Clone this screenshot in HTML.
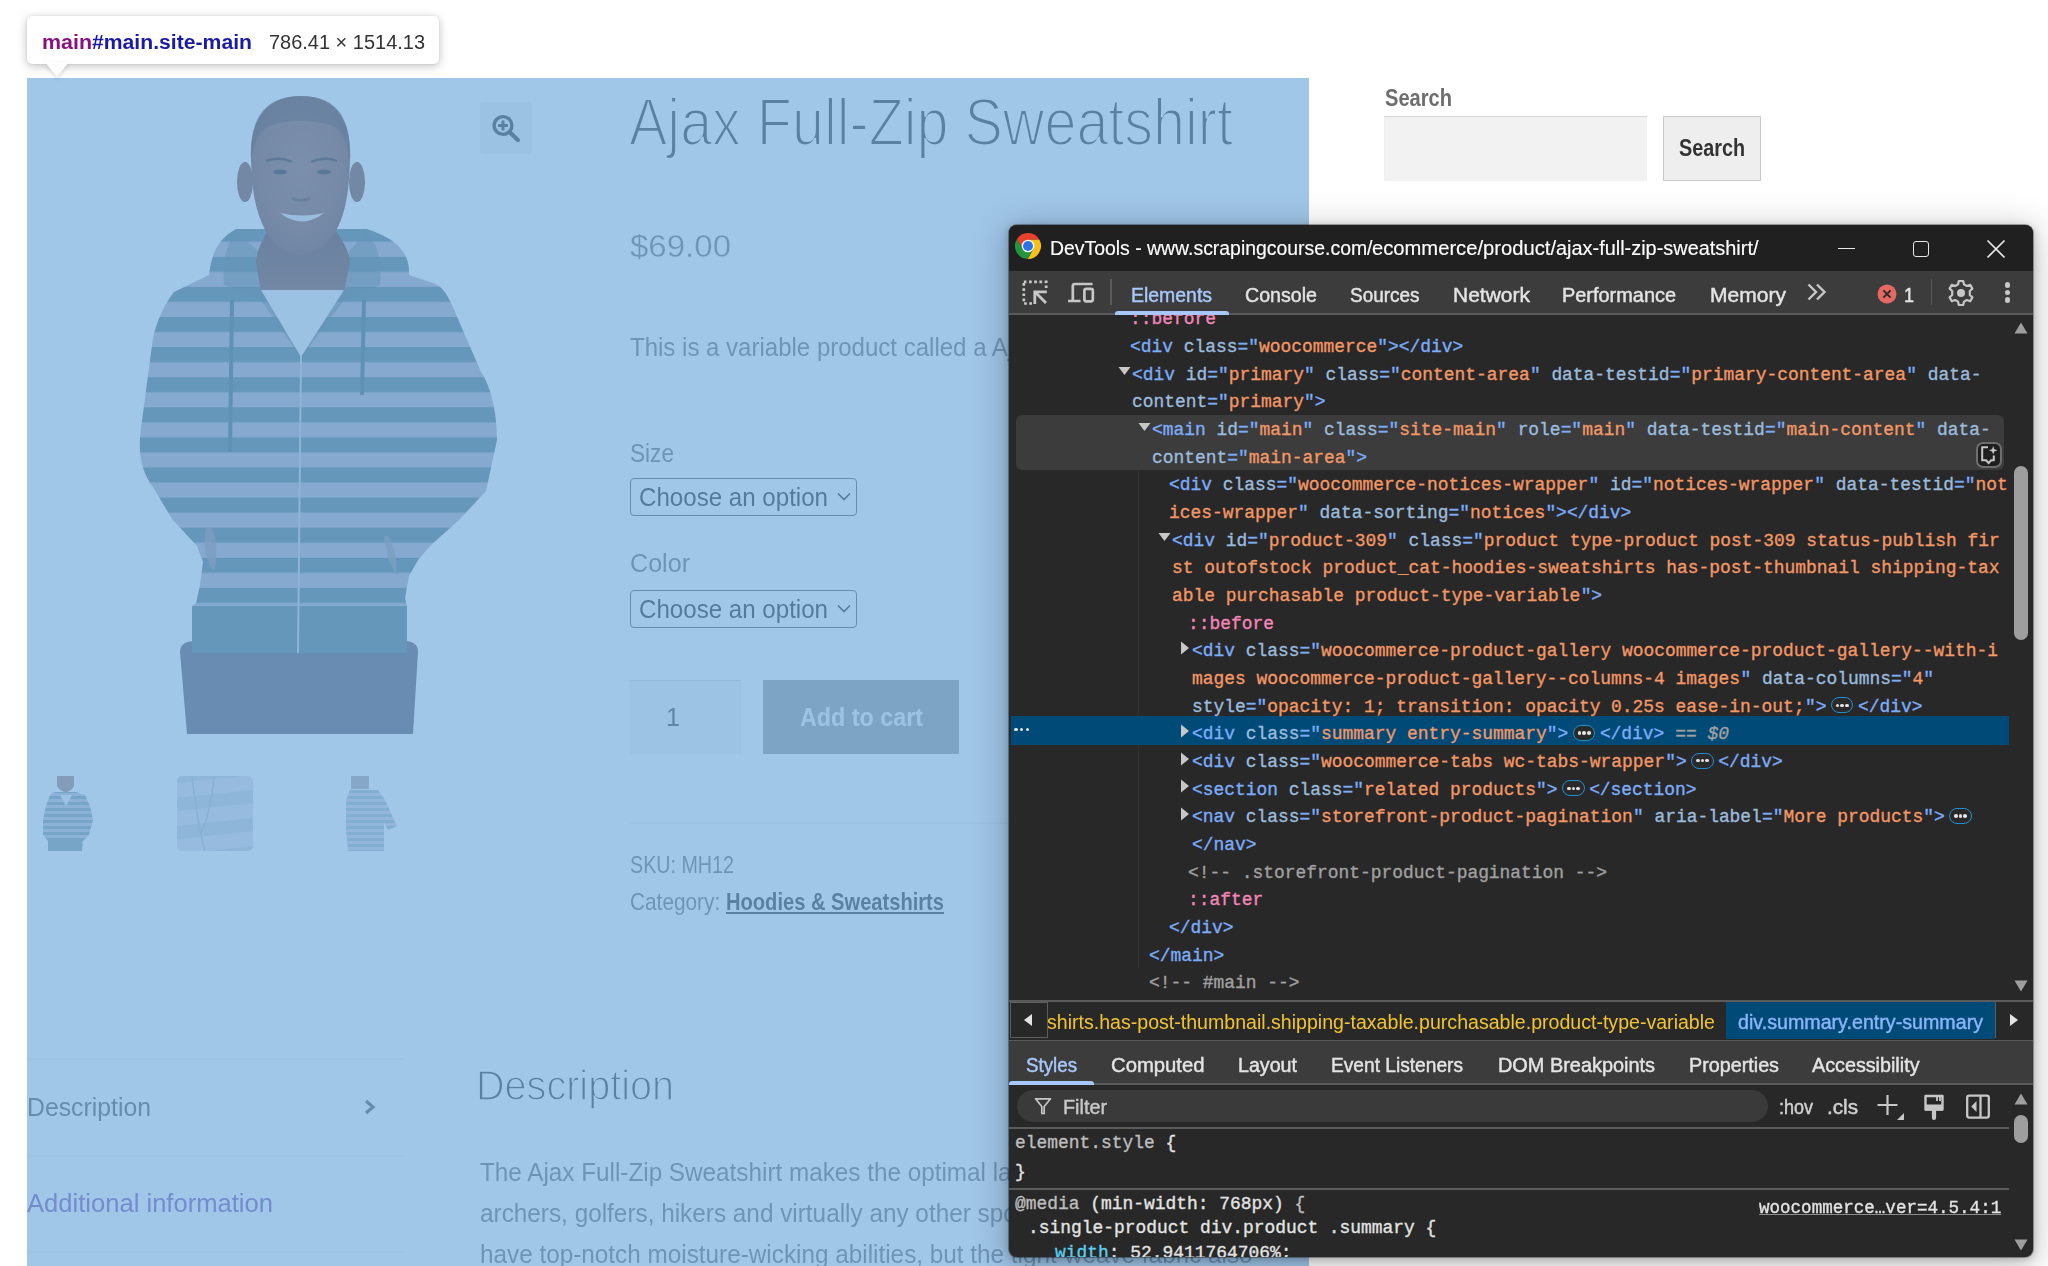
<!DOCTYPE html><html><head><meta charset="utf-8"><style>
html,body{margin:0;padding:0}
body{width:2048px;height:1266px;overflow:hidden;background:#fff;position:relative;font-family:"Liberation Sans",sans-serif}
.t{position:absolute;white-space:pre;line-height:1;transform-origin:0 0}
.r{position:absolute}
.abs{position:absolute}
#page{position:absolute;left:0;top:0;width:2048px;height:1266px}
</style></head><body><div id="page">
<svg class="abs" style="left:0;top:0" width="620" height="760" viewBox="0 0 620 760">
<defs><radialGradient id="fg" cx="0.5" cy="0.45" r="0.6"><stop offset="0" stop-color="#93604f"/><stop offset="0.7" stop-color="#835043"/><stop offset="1" stop-color="#6a3d31"/></radialGradient><linearGradient id="ng" x1="0" y1="0" x2="0" y2="1"><stop offset="0" stop-color="#5e362b"/><stop offset="1" stop-color="#7a4a3c"/></linearGradient>
<clipPath id="hc"><path d="M209,275 L174,292 C160,310 154,330 152,345 L141,428 C138,450 140,470 153,487 L172,519 L197,546 L203,562 L200,585 L196,603 L192,606 L192,653 L407,653 L407,606 L405,598 L409,576 L418,560 L430,546 L460,519 L486,491 L497,440 C497,410 490,385 481,372 L452,305 C445,290 440,285 433,283 L409,275 C410,255 400,240 367,229 L236,229 C220,238 212,250 209,275 Z"/></clipPath>
<pattern id="st" x="0" y="317" width="40" height="30.1" patternUnits="userSpaceOnUse"><rect width="40" height="30.1" fill="#b2abb8"/><rect width="40" height="15" fill="#4f7679"/></pattern>
</defs>
<path d="M180,652 C180,644 186,641 196,641 L404,641 C414,641 418,645 418,652 L413,734 L187,734 Z" fill="#5e5a60"/>
<g clip-path="url(#hc)"><rect x="130" y="225" width="380" height="440" fill="url(#st)"/></g>
<path d="M236,232 C226,245 222,262 224,285 L261,300 L301,358 L257,250 Z" fill="#5a6f72" opacity="0.55"/>
<path d="M367,232 C378,245 382,262 380,285 L344,300 L301,358 L350,250 Z" fill="#5a6f72" opacity="0.55"/>
<path d="M192,606 L407,606 L407,653 L192,653 Z" fill="#4f7679"/>
<path d="M270,228 L334,228 C342,240 349,250 350,262 L344,292 L301,300 L261,292 L256,262 C257,250 262,240 270,228 Z" fill="url(#ng)"/>
<path d="M261,290 L344,290 L301,357 Z" fill="#f0f0f0"/>
<path d="M251,160 C249,118 268,96 301,96 C334,96 352,118 350,160 C349,200 343,228 325,245 C315,253 307,255 301,255 C294,255 286,253 277,245 C259,228 252,200 251,160 Z" fill="url(#fg)"/>
<path d="M251,160 C249,112 270,96 301,96 C332,96 352,112 350,160 C347,140 340,128 330,125 C318,122 310,121 301,121 C290,121 280,122 270,126 C260,130 254,142 251,160 Z" fill="#4d3027" opacity="0.6"/>
<ellipse cx="245" cy="182" rx="8" ry="20" fill="#7a4a3c"/>
<ellipse cx="357" cy="182" rx="8" ry="20" fill="#7a4a3c"/>
<path d="M280,213 Q302,218 324,213 Q302,230 280,213 Z" fill="#e9e4e4"/><path d="M292,198 Q301,203 310,198" stroke="#5b352b" stroke-width="3" fill="none"/>
<ellipse cx="280" cy="172" rx="7" ry="2.6" fill="#2a1a14"/><path d="M266,161 Q280,156 292,162" stroke="#3a2219" stroke-width="2.4" fill="none"/>
<ellipse cx="324" cy="172" rx="7" ry="2.6" fill="#2a1a14"/><path d="M311,162 Q324,156 337,161" stroke="#3a2219" stroke-width="2.4" fill="none"/>
<path d="M301,356 L298,653" stroke="#c9c9c9" stroke-width="2"/>
<path d="M232,300 L230,452" stroke="#3f6466" stroke-width="4"/>
<path d="M364,300 L362,395" stroke="#3f6466" stroke-width="4"/>
<path d="M206,528 C203,545 205,560 214,571 C218,556 217,540 212,528 Z" fill="#9a8a90" opacity="0.8"/>
<path d="M384,536 C386,552 390,566 396,575 C398,560 394,546 388,536 Z" fill="#9a8a90" opacity="0.8"/>
</svg>

<div class="r" style="left:480.00px;top:102.00px;width:52.00px;height:52.00px;background:rgba(0,0,0,0.06);border-radius:4px;"></div>
<svg class="abs" style="left:492px;top:114px" width="30" height="30" viewBox="0 0 30 30"><circle cx="11" cy="11.5" r="8.9" fill="none" stroke="#333" stroke-width="3.4"/><path d="M17.8 18.3 L25.8 26" stroke="#333" stroke-width="4.2" stroke-linecap="round"/><path d="M11 6.6 V16.4 M6.1 11.5 H15.9" stroke="#333" stroke-width="3"/></svg>
<div class="t" style="left:628.50px;top:89.40px;font-size:66px;color:#333333;transform:scaleX(0.8713);-webkit-text-stroke:2.2px #fff;">Ajax Full-Zip Sweatshirt</div>
<div class="t" style="left:630.00px;top:229.90px;font-size:32px;color:#6d6d6d;transform:scaleX(1.0319);-webkit-text-stroke:0.3px #fff;">$69.00</div>
<div class="t" style="left:630.00px;top:335.40px;font-size:25.5px;color:#6d6d6d;transform:scaleX(0.942);">This is a variable product called a Ajax Full-Zip Sweatshirt</div>
<div class="t" style="left:630.00px;top:439.98px;font-size:26px;color:#6d6d6d;transform:scaleX(0.8699);">Size</div>
<div class="r" style="left:630.00px;top:478.00px;width:227.00px;height:38.00px;background:#fff;border:1.3px solid #555;border-radius:4px;box-sizing:border-box;"></div>
<div class="t" style="left:639.00px;top:483.98px;font-size:26px;color:#222;transform:scaleX(0.9273);">Choose an option</div>
<svg class="abs" style="left:836px;top:490px" width="16" height="12" viewBox="0 0 16 12"><path d="M2 3.5 L8 9.5 L14 3.5" fill="none" stroke="#222" stroke-width="1.6"/></svg>
<div class="t" style="left:630.00px;top:550.48px;font-size:26px;color:#6d6d6d;transform:scaleX(0.9657);">Color</div>
<div class="r" style="left:630.00px;top:590.00px;width:227.00px;height:38.00px;background:#fff;border:1.3px solid #555;border-radius:4px;box-sizing:border-box;"></div>
<div class="t" style="left:639.00px;top:595.98px;font-size:26px;color:#222;transform:scaleX(0.9273);">Choose an option</div>
<svg class="abs" style="left:836px;top:602px" width="16" height="12" viewBox="0 0 16 12"><path d="M2 3.5 L8 9.5 L14 3.5" fill="none" stroke="#222" stroke-width="1.6"/></svg>
<div class="r" style="left:630.00px;top:680.00px;width:111.00px;height:74.00px;background:#f2f2f2;box-shadow:inset 0 1px 1px rgba(0,0,0,.125);"></div>
<div class="t" style="left:666.00px;top:703.98px;font-size:26px;color:#43454b;transform:scaleX(0.9682);">1</div>
<div class="r" style="left:763.00px;top:680.00px;width:196.00px;height:74.00px;background:#999999;"></div>
<div class="t" style="left:800.00px;top:703.98px;font-size:26px;color:#f4f4f4;font-weight:bold;transform:scaleX(0.8963);">Add to cart</div>
<div class="r" style="left:630.00px;top:822.00px;width:390.00px;height:1.50px;background:rgba(0,0,0,0.05);"></div>
<div class="t" style="left:630.00px;top:852.67px;font-size:24px;color:#6d6d6d;transform:scaleX(0.8208);">SKU: MH12</div>
<div class="t" style="left:630.00px;top:890.17px;font-size:24px;color:#6d6d6d;transform:scaleX(0.8671);">Category: </div>
<div class="t" style="left:726.00px;top:890.17px;font-size:24px;color:#333333;font-weight:bold;transform:scaleX(0.8383);text-decoration:underline;">Hoodies &amp; Sweatshirts</div>
<svg class="abs" style="left:0;top:760px" width="420" height="100" viewBox="0 760 420 100">
<defs>
<pattern id="st2" x="0" y="796" width="20" height="6" patternUnits="userSpaceOnUse"><rect width="20" height="6" fill="#b2abb8"/><rect width="20" height="3" fill="#4f7679"/></pattern>
<pattern id="st3" x="0" y="0" width="80" height="28" patternUnits="userSpaceOnUse" patternTransform="rotate(-6)"><rect width="80" height="28" fill="#c4bfc6"/><rect width="80" height="13" fill="#8fa2a6"/></pattern>
</defs>
<g opacity="0.7">
<path d="M57,776 L74,776 L74,786 C72,790 68,792 65.5,792 C63,792 59,790 57,786 Z" fill="#835043"/>
<path d="M55,792 L76,792 L85,795 L90,806 L93,820 L89,835 L83,841 L82,851 L48,851 L48,841 L43,835 L43,820 L46,806 L50,795 Z" fill="url(#st2)"/>
<path d="M60,795 L72,795 L66,806 Z" fill="#f0f0f0"/>
<rect x="48" y="841" width="34" height="10" fill="#4f7679"/>
</g>
<g opacity="0.5">
<rect x="177" y="776" width="76" height="75" rx="5" fill="url(#st3)"/>
<path d="M214,776 C212,800 208,820 200,835 M192,776 C196,810 200,835 205,851" stroke="#6f8587" stroke-width="1.5" fill="none"/>
<path d="M351,776 L369,776 L369,789 L351,789 Z" fill="#6b4a3f"/>
<path d="M350,790 L378,790 L385,800 L397,826 L388,830 L384,822 L384,851 L348,851 L346,830 L346,800 Z" fill="url(#st2)"/>
</g>
</svg>

<div class="r" style="left:27.00px;top:1058.00px;width:378.00px;height:2.00px;background:rgba(0,0,0,0.05);"></div>
<div class="t" style="left:27.00px;top:1093.98px;font-size:26px;color:#555555;transform:scaleX(0.9535);">Description</div>
<svg class="abs" style="left:362px;top:1098px" width="16" height="18" viewBox="0 0 16 18"><path d="M4 3 L11 9 L4 15" fill="none" stroke="#555" stroke-width="3.2"/></svg>
<div class="r" style="left:27.00px;top:1155.00px;width:378.00px;height:2.00px;background:rgba(0,0,0,0.05);"></div>
<div class="t" style="left:27.00px;top:1189.98px;font-size:26px;color:#7f54b3;transform:scaleX(0.9839);">Additional information</div>
<div class="r" style="left:27.00px;top:1251.00px;width:378.00px;height:2.00px;background:rgba(0,0,0,0.05);"></div>
<div class="t" style="left:476.00px;top:1064.08px;font-size:43px;color:#333333;transform:scaleX(0.9206);-webkit-text-stroke:1.4px #fff;">Description</div>
<div class="t" style="left:479.50px;top:1160.00px;font-size:25.5px;color:#6d6d6d;transform:scaleX(0.952);">The Ajax Full-Zip Sweatshirt makes the optimal layering piece for</div>
<div class="t" style="left:479.50px;top:1200.90px;font-size:25.5px;color:#6d6d6d;transform:scaleX(0.954);">archers, golfers, hikers and virtually any other sports enthusiast</div>
<div class="t" style="left:479.50px;top:1241.80px;font-size:25.5px;color:#6d6d6d;transform:scaleX(0.953);">have top-notch moisture-wicking abilities, but the tight-weave fabric also</div>
</div>
<div class="r" style="left:27px;top:78px;width:1282px;height:1188px;background:rgba(111,168,220,0.66)"></div>
<div class="t" style="left:1385.00px;top:85.67px;font-size:24px;color:#6d6d6d;font-weight:bold;transform:scaleX(0.8370);">Search</div>
<div class="r" style="left:1384.00px;top:116.00px;width:263.00px;height:65.00px;background:#f2f2f2;box-shadow:inset 0 1px 1px rgba(0,0,0,.125);"></div>
<div class="r" style="left:1663.00px;top:116.00px;width:98.00px;height:65.00px;background:#eeeeee;border:1.5px solid #c9c9c9;box-sizing:border-box;"></div>
<div class="t" style="left:1679.00px;top:136.17px;font-size:24px;color:#333333;font-weight:bold;transform:scaleX(0.8245);">Search</div>
<div class="r" style="left:27px;top:16px;width:412px;height:48px;background:#fff;border-radius:5px;box-shadow:0 2px 10px rgba(0,0,0,0.26),0 0 1px rgba(0,0,0,0.2)"></div>
<div class="r" style="left:45px;top:62px;width:0;height:0;border-left:12px solid transparent;border-right:12px solid transparent;border-top:15px solid #fff;filter:drop-shadow(0 2px 2px rgba(0,0,0,.15))"></div>
<div class="t" style="left:42.00px;top:32.06px;font-size:20px;color:#881280;font-weight:bold;transform:scaleX(1.0711);">main</div>
<div class="t" style="left:92.00px;top:32.06px;font-size:20px;color:#1a1aa6;font-weight:bold;transform:scaleX(1.0585);">#main.site-main</div>
<div class="t" style="left:269.00px;top:32.06px;font-size:20px;color:#333333;transform:scaleX(0.9983);">786.41 × 1514.13</div>
<div id="dt" style="position:absolute;left:1009px;top:225px;width:1024px;height:1032px;background:#282828;border-radius:8px;overflow:hidden;box-shadow:0 6px 34px 4px rgba(0,0,0,0.22),0 2px 8px rgba(0,0,0,0.25),0 0 0 1px rgba(0,0,0,0.3)">
<div class="r" style="left:0.00px;top:0.00px;width:1024.00px;height:46.00px;background:#202020;"></div>
<svg class="abs" style="left:5.3px;top:7.3px" width="28" height="28" viewBox="-14 -14 28 28"><path d="M0,-6.2 L11.43,-6.2 A13,13 0 0 0 -11.08,-6.8 L-5.37,3.1 Z" fill="#e8412f"/><path d="M5.37,3.1 L-0.35,13 A13,13 0 0 0 11.43,-6.2 L0,-6.2 Z" fill="#fbc11a"/><path d="M-5.37,3.1 L-11.08,-6.8 A13,13 0 0 0 -0.35,13 L5.37,3.1 Z" fill="#22953f"/><circle r="6.3" fill="#fff"/><circle r="5" fill="#2a74e6"/></svg>
<div class="t" style="left:41.00px;top:12.56px;font-size:20px;color:#ffffff;-webkit-text-stroke:0.15px currentColor;transform:scaleX(0.9704);">DevTools - www.scrapingcourse.com/</div>
<div class="t" style="left:363.00px;top:12.56px;font-size:20px;color:#ffffff;-webkit-text-stroke:0.15px currentColor;transform:scaleX(1.0093);">ecommerce/product/</div>
<div class="t" style="left:546.50px;top:12.56px;font-size:20px;color:#ffffff;-webkit-text-stroke:0.15px currentColor;transform:scaleX(0.9956);">ajax-full-zip-sweatshirt/</div>
<div class="r" style="left:829.00px;top:22.50px;width:17.00px;height:1.60px;background:#e8e8e8;"></div>
<div class="r" style="left:903.50px;top:15.50px;width:16.00px;height:16.00px;background:transparent;border:1.6px solid #e8e8e8;border-radius:3px;box-sizing:border-box;"></div>
<svg class="abs" style="left:977px;top:14px" width="20" height="20" viewBox="0 0 20 20"><path d="M1.5 1.5 L18.5 18.5 M18.5 1.5 L1.5 18.5" stroke="#e8e8e8" stroke-width="1.7"/></svg>
<div class="r" style="left:0.00px;top:46.00px;width:1024.00px;height:42.00px;background:#3c3c3c;"></div>
<div class="r" style="left:0.00px;top:88.00px;width:1024.00px;height:2.00px;background:#5b5b5b;"></div>
<svg class="abs" style="left:12px;top:54px" width="30" height="30" viewBox="0 0 30 30"><path d="M2.8 2.8 H25.2 V10 M11 24.5 H2.8 V2.8" fill="none" stroke="#c7c7c7" stroke-width="2.7" stroke-dasharray="2.7 2.5"/><path d="M13.8 12.8 L25 24 M13.8 11.5 L13.8 25 M12.5 12.8 L25.8 12.8" fill="none" stroke="#c7c7c7" stroke-width="2.8"/></svg>
<svg class="abs" style="left:57px;top:56px" width="30" height="28" viewBox="0 0 30 28"><path d="M26.5 3 H9 Q6.8 3 6.8 5 V19.5 M2 20 H14.5" fill="none" stroke="#c7c7c7" stroke-width="2.7"/><rect x="18.4" y="7.8" width="8.4" height="12.6" rx="1.8" fill="none" stroke="#c7c7c7" stroke-width="2.7"/></svg>
<div class="r" style="left:101.00px;top:54.00px;width:1.50px;height:26.00px;background:#5b5b5b;"></div>
<div class="t" style="left:122.00px;top:59.56px;font-size:20px;color:#a8c7fa;-webkit-text-stroke:0.45px currentColor;transform:scaleX(0.9716);">Elements</div>
<div class="r" style="left:106.00px;top:86.00px;width:114.00px;height:4.00px;background:#a8c7fa;border-radius:3px 3px 0 0;"></div>
<div class="t" style="left:236.00px;top:59.56px;font-size:20px;color:#e3e3e3;-webkit-text-stroke:0.45px currentColor;transform:scaleX(0.9812);">Console</div>
<div class="t" style="left:341.00px;top:59.56px;font-size:20px;color:#e3e3e3;-webkit-text-stroke:0.45px currentColor;transform:scaleX(0.9473);">Sources</div>
<div class="t" style="left:444.00px;top:59.56px;font-size:20px;color:#e3e3e3;-webkit-text-stroke:0.45px currentColor;transform:scaleX(1.0498);">Network</div>
<div class="t" style="left:553.00px;top:59.56px;font-size:20px;color:#e3e3e3;-webkit-text-stroke:0.45px currentColor;transform:scaleX(0.9957);">Performance</div>
<div class="t" style="left:700.50px;top:59.56px;font-size:20px;color:#e3e3e3;-webkit-text-stroke:0.45px currentColor;transform:scaleX(1.0522);">Memory</div>
<svg class="abs" style="left:797px;top:57px" width="24" height="24" viewBox="0 0 24 24"><path d="M2.5 2.5 L10 10 L2.5 17.5 M11 2.5 L18.5 10 L11 17.5" fill="none" stroke="#c7c7c7" stroke-width="2.4"/></svg>
<svg class="abs" style="left:868px;top:59px" width="20" height="20" viewBox="0 0 20 20"><circle cx="10" cy="10" r="9.5" fill="#e46962"/><path d="M6.4 6.4 L13.6 13.6 M13.6 6.4 L6.4 13.6" stroke="#2a2a2a" stroke-width="1.9"/></svg>
<div class="t" style="left:895.00px;top:59.56px;font-size:20px;color:#e3e3e3;-webkit-text-stroke:0.45px currentColor;transform:scaleX(0.8990);">1</div>
<div class="r" style="left:921.50px;top:54.00px;width:1.50px;height:26.00px;background:#5b5b5b;"></div>
<svg class="abs" style="left:938px;top:54px" width="28" height="28" viewBox="-14 -14 28 28"><path d="M-2.2,-12 L2.2,-12 L3,-8.6 L5.9,-7 L9.2,-8.2 L11.4,-4.4 L8.8,-2 L8.8,2 L11.4,4.4 L9.2,8.2 L5.9,7 L3,8.6 L2.2,12 L-2.2,12 L-3,8.6 L-5.9,7 L-9.2,8.2 L-11.4,4.4 L-8.8,2 L-8.8,-2 L-11.4,-4.4 L-9.2,-8.2 L-5.9,-7 L-3,-8.6 Z" fill="none" stroke="#c7c7c7" stroke-width="2.2" stroke-linejoin="round"/><circle r="4" fill="#c7c7c7"/></svg>
<div class="r" style="left:995.50px;top:57.40px;width:5.20px;height:5.20px;background:#c7c7c7;border-radius:50%;"></div>
<div class="r" style="left:995.50px;top:64.90px;width:5.20px;height:5.20px;background:#c7c7c7;border-radius:50%;"></div>
<div class="r" style="left:995.50px;top:72.40px;width:5.20px;height:5.20px;background:#c7c7c7;border-radius:50%;"></div>
<div style="position:absolute;left:0;top:90px;width:1024px;height:685px;overflow:hidden">
<div class="r" style="left:129.30px;top:155.00px;width:1.20px;height:499.00px;background:#313131;"></div>
<div class="r" style="left:6.50px;top:100.00px;width:988.00px;height:55.00px;background:#3c3c3c;border-radius:6px;"></div>
<div class="r" style="left:1.50px;top:401.00px;width:998.50px;height:29.00px;background:#004a77;"></div>
<div class="r" style="left:5.00px;top:412.50px;width:3.60px;height:3.60px;background:#e3e3e3;border-radius:50%;"></div>
<div class="r" style="left:10.80px;top:412.50px;width:3.60px;height:3.60px;background:#e3e3e3;border-radius:50%;"></div>
<div class="r" style="left:16.60px;top:412.50px;width:3.60px;height:3.60px;background:#e3e3e3;border-radius:50%;"></div>
<div class="t" style="left:121.00px;top:-3.81px;font-size:17.92px;color:#f386b6;font-family:'Liberation Mono',monospace;-webkit-text-stroke:0.35px currentColor;">::before</div>
<div class="t" style="left:121.00px;top:23.86px;font-size:17.92px;color:#7cacf8;font-family:'Liberation Mono',monospace;-webkit-text-stroke:0.35px currentColor;">&lt;div </div><div class="t" style="left:174.77px;top:23.86px;font-size:17.92px;color:#9bbbdc;font-family:'Liberation Mono',monospace;-webkit-text-stroke:0.35px currentColor;">class</div><div class="t" style="left:228.54px;top:23.86px;font-size:17.92px;color:#7cacf8;font-family:'Liberation Mono',monospace;-webkit-text-stroke:0.35px currentColor;">=&quot;</div><div class="t" style="left:250.04px;top:23.86px;font-size:17.92px;color:#f29766;font-family:'Liberation Mono',monospace;-webkit-text-stroke:0.35px currentColor;">woocommerce</div><div class="t" style="left:368.33px;top:23.86px;font-size:17.92px;color:#7cacf8;font-family:'Liberation Mono',monospace;-webkit-text-stroke:0.35px currentColor;">&quot;&gt;</div><div class="t" style="left:389.84px;top:23.86px;font-size:17.92px;color:#7cacf8;font-family:'Liberation Mono',monospace;-webkit-text-stroke:0.35px currentColor;">&lt;/div&gt;</div>
<div class="t" style="left:123.00px;top:51.54px;font-size:17.92px;color:#7cacf8;font-family:'Liberation Mono',monospace;-webkit-text-stroke:0.35px currentColor;">&lt;div </div><div class="t" style="left:176.77px;top:51.54px;font-size:17.92px;color:#9bbbdc;font-family:'Liberation Mono',monospace;-webkit-text-stroke:0.35px currentColor;">id</div><div class="t" style="left:198.28px;top:51.54px;font-size:17.92px;color:#7cacf8;font-family:'Liberation Mono',monospace;-webkit-text-stroke:0.35px currentColor;">=&quot;</div><div class="t" style="left:219.78px;top:51.54px;font-size:17.92px;color:#f29766;font-family:'Liberation Mono',monospace;-webkit-text-stroke:0.35px currentColor;">primary</div><div class="t" style="left:295.06px;top:51.54px;font-size:17.92px;color:#7cacf8;font-family:'Liberation Mono',monospace;-webkit-text-stroke:0.35px currentColor;">&quot; </div><div class="t" style="left:316.57px;top:51.54px;font-size:17.92px;color:#9bbbdc;font-family:'Liberation Mono',monospace;-webkit-text-stroke:0.35px currentColor;">class</div><div class="t" style="left:370.33px;top:51.54px;font-size:17.92px;color:#7cacf8;font-family:'Liberation Mono',monospace;-webkit-text-stroke:0.35px currentColor;">=&quot;</div><div class="t" style="left:391.84px;top:51.54px;font-size:17.92px;color:#f29766;font-family:'Liberation Mono',monospace;-webkit-text-stroke:0.35px currentColor;">content-area</div><div class="t" style="left:520.89px;top:51.54px;font-size:17.92px;color:#7cacf8;font-family:'Liberation Mono',monospace;-webkit-text-stroke:0.35px currentColor;">&quot; </div><div class="t" style="left:542.39px;top:51.54px;font-size:17.92px;color:#9bbbdc;font-family:'Liberation Mono',monospace;-webkit-text-stroke:0.35px currentColor;">data-testid</div><div class="t" style="left:660.68px;top:51.54px;font-size:17.92px;color:#7cacf8;font-family:'Liberation Mono',monospace;-webkit-text-stroke:0.35px currentColor;">=&quot;</div><div class="t" style="left:682.19px;top:51.54px;font-size:17.92px;color:#f29766;font-family:'Liberation Mono',monospace;-webkit-text-stroke:0.35px currentColor;">primary-content-area</div><div class="t" style="left:897.26px;top:51.54px;font-size:17.92px;color:#7cacf8;font-family:'Liberation Mono',monospace;-webkit-text-stroke:0.35px currentColor;">&quot; </div><div class="t" style="left:918.77px;top:51.54px;font-size:17.92px;color:#9bbbdc;font-family:'Liberation Mono',monospace;-webkit-text-stroke:0.35px currentColor;">data-</div>
<div class="t" style="left:123.00px;top:79.21px;font-size:17.92px;color:#9bbbdc;font-family:'Liberation Mono',monospace;-webkit-text-stroke:0.35px currentColor;">content</div><div class="t" style="left:198.28px;top:79.21px;font-size:17.92px;color:#7cacf8;font-family:'Liberation Mono',monospace;-webkit-text-stroke:0.35px currentColor;">=&quot;</div><div class="t" style="left:219.78px;top:79.21px;font-size:17.92px;color:#f29766;font-family:'Liberation Mono',monospace;-webkit-text-stroke:0.35px currentColor;">primary</div><div class="t" style="left:295.06px;top:79.21px;font-size:17.92px;color:#7cacf8;font-family:'Liberation Mono',monospace;-webkit-text-stroke:0.35px currentColor;">&quot;&gt;</div>
<div class="t" style="left:143.00px;top:106.88px;font-size:17.92px;color:#7cacf8;font-family:'Liberation Mono',monospace;-webkit-text-stroke:0.35px currentColor;">&lt;main </div><div class="t" style="left:207.52px;top:106.88px;font-size:17.92px;color:#9bbbdc;font-family:'Liberation Mono',monospace;-webkit-text-stroke:0.35px currentColor;">id</div><div class="t" style="left:229.03px;top:106.88px;font-size:17.92px;color:#7cacf8;font-family:'Liberation Mono',monospace;-webkit-text-stroke:0.35px currentColor;">=&quot;</div><div class="t" style="left:250.54px;top:106.88px;font-size:17.92px;color:#f29766;font-family:'Liberation Mono',monospace;-webkit-text-stroke:0.35px currentColor;">main</div><div class="t" style="left:293.55px;top:106.88px;font-size:17.92px;color:#7cacf8;font-family:'Liberation Mono',monospace;-webkit-text-stroke:0.35px currentColor;">&quot; </div><div class="t" style="left:315.06px;top:106.88px;font-size:17.92px;color:#9bbbdc;font-family:'Liberation Mono',monospace;-webkit-text-stroke:0.35px currentColor;">class</div><div class="t" style="left:368.83px;top:106.88px;font-size:17.92px;color:#7cacf8;font-family:'Liberation Mono',monospace;-webkit-text-stroke:0.35px currentColor;">=&quot;</div><div class="t" style="left:390.33px;top:106.88px;font-size:17.92px;color:#f29766;font-family:'Liberation Mono',monospace;-webkit-text-stroke:0.35px currentColor;">site-main</div><div class="t" style="left:487.12px;top:106.88px;font-size:17.92px;color:#7cacf8;font-family:'Liberation Mono',monospace;-webkit-text-stroke:0.35px currentColor;">&quot; </div><div class="t" style="left:508.63px;top:106.88px;font-size:17.92px;color:#9bbbdc;font-family:'Liberation Mono',monospace;-webkit-text-stroke:0.35px currentColor;">role</div><div class="t" style="left:551.64px;top:106.88px;font-size:17.92px;color:#7cacf8;font-family:'Liberation Mono',monospace;-webkit-text-stroke:0.35px currentColor;">=&quot;</div><div class="t" style="left:573.15px;top:106.88px;font-size:17.92px;color:#f29766;font-family:'Liberation Mono',monospace;-webkit-text-stroke:0.35px currentColor;">main</div><div class="t" style="left:616.16px;top:106.88px;font-size:17.92px;color:#7cacf8;font-family:'Liberation Mono',monospace;-webkit-text-stroke:0.35px currentColor;">&quot; </div><div class="t" style="left:637.67px;top:106.88px;font-size:17.92px;color:#9bbbdc;font-family:'Liberation Mono',monospace;-webkit-text-stroke:0.35px currentColor;">data-testid</div><div class="t" style="left:755.96px;top:106.88px;font-size:17.92px;color:#7cacf8;font-family:'Liberation Mono',monospace;-webkit-text-stroke:0.35px currentColor;">=&quot;</div><div class="t" style="left:777.47px;top:106.88px;font-size:17.92px;color:#f29766;font-family:'Liberation Mono',monospace;-webkit-text-stroke:0.35px currentColor;">main-content</div><div class="t" style="left:906.51px;top:106.88px;font-size:17.92px;color:#7cacf8;font-family:'Liberation Mono',monospace;-webkit-text-stroke:0.35px currentColor;">&quot; </div><div class="t" style="left:928.02px;top:106.88px;font-size:17.92px;color:#9bbbdc;font-family:'Liberation Mono',monospace;-webkit-text-stroke:0.35px currentColor;">data-</div>
<div class="t" style="left:143.00px;top:134.55px;font-size:17.92px;color:#9bbbdc;font-family:'Liberation Mono',monospace;-webkit-text-stroke:0.35px currentColor;">content</div><div class="t" style="left:218.28px;top:134.55px;font-size:17.92px;color:#7cacf8;font-family:'Liberation Mono',monospace;-webkit-text-stroke:0.35px currentColor;">=&quot;</div><div class="t" style="left:239.78px;top:134.55px;font-size:17.92px;color:#f29766;font-family:'Liberation Mono',monospace;-webkit-text-stroke:0.35px currentColor;">main-area</div><div class="t" style="left:336.57px;top:134.55px;font-size:17.92px;color:#7cacf8;font-family:'Liberation Mono',monospace;-webkit-text-stroke:0.35px currentColor;">&quot;&gt;</div>
<div class="t" style="left:160.00px;top:162.22px;font-size:17.92px;color:#7cacf8;font-family:'Liberation Mono',monospace;-webkit-text-stroke:0.35px currentColor;">&lt;div </div><div class="t" style="left:213.77px;top:162.22px;font-size:17.92px;color:#9bbbdc;font-family:'Liberation Mono',monospace;-webkit-text-stroke:0.35px currentColor;">class</div><div class="t" style="left:267.54px;top:162.22px;font-size:17.92px;color:#7cacf8;font-family:'Liberation Mono',monospace;-webkit-text-stroke:0.35px currentColor;">=&quot;</div><div class="t" style="left:289.04px;top:162.22px;font-size:17.92px;color:#f29766;font-family:'Liberation Mono',monospace;-webkit-text-stroke:0.35px currentColor;">woocommerce-notices-wrapper</div><div class="t" style="left:579.39px;top:162.22px;font-size:17.92px;color:#7cacf8;font-family:'Liberation Mono',monospace;-webkit-text-stroke:0.35px currentColor;">&quot; </div><div class="t" style="left:600.90px;top:162.22px;font-size:17.92px;color:#9bbbdc;font-family:'Liberation Mono',monospace;-webkit-text-stroke:0.35px currentColor;">id</div><div class="t" style="left:622.41px;top:162.22px;font-size:17.92px;color:#7cacf8;font-family:'Liberation Mono',monospace;-webkit-text-stroke:0.35px currentColor;">=&quot;</div><div class="t" style="left:643.92px;top:162.22px;font-size:17.92px;color:#f29766;font-family:'Liberation Mono',monospace;-webkit-text-stroke:0.35px currentColor;">notices-wrapper</div><div class="t" style="left:805.22px;top:162.22px;font-size:17.92px;color:#7cacf8;font-family:'Liberation Mono',monospace;-webkit-text-stroke:0.35px currentColor;">&quot; </div><div class="t" style="left:826.73px;top:162.22px;font-size:17.92px;color:#9bbbdc;font-family:'Liberation Mono',monospace;-webkit-text-stroke:0.35px currentColor;">data-testid</div><div class="t" style="left:945.02px;top:162.22px;font-size:17.92px;color:#7cacf8;font-family:'Liberation Mono',monospace;-webkit-text-stroke:0.35px currentColor;">=&quot;</div><div class="t" style="left:966.53px;top:162.22px;font-size:17.92px;color:#f29766;font-family:'Liberation Mono',monospace;-webkit-text-stroke:0.35px currentColor;">not</div>
<div class="t" style="left:160.00px;top:189.90px;font-size:17.92px;color:#f29766;font-family:'Liberation Mono',monospace;-webkit-text-stroke:0.35px currentColor;">ices-wrapper</div><div class="t" style="left:289.04px;top:189.90px;font-size:17.92px;color:#7cacf8;font-family:'Liberation Mono',monospace;-webkit-text-stroke:0.35px currentColor;">&quot; </div><div class="t" style="left:310.55px;top:189.90px;font-size:17.92px;color:#9bbbdc;font-family:'Liberation Mono',monospace;-webkit-text-stroke:0.35px currentColor;">data-sorting</div><div class="t" style="left:439.60px;top:189.90px;font-size:17.92px;color:#7cacf8;font-family:'Liberation Mono',monospace;-webkit-text-stroke:0.35px currentColor;">=&quot;</div><div class="t" style="left:461.10px;top:189.90px;font-size:17.92px;color:#f29766;font-family:'Liberation Mono',monospace;-webkit-text-stroke:0.35px currentColor;">notices</div><div class="t" style="left:536.38px;top:189.90px;font-size:17.92px;color:#7cacf8;font-family:'Liberation Mono',monospace;-webkit-text-stroke:0.35px currentColor;">&quot;&gt;</div><div class="t" style="left:557.89px;top:189.90px;font-size:17.92px;color:#7cacf8;font-family:'Liberation Mono',monospace;-webkit-text-stroke:0.35px currentColor;">&lt;/div&gt;</div>
<div class="t" style="left:163.00px;top:217.57px;font-size:17.92px;color:#7cacf8;font-family:'Liberation Mono',monospace;-webkit-text-stroke:0.35px currentColor;">&lt;div </div><div class="t" style="left:216.77px;top:217.57px;font-size:17.92px;color:#9bbbdc;font-family:'Liberation Mono',monospace;-webkit-text-stroke:0.35px currentColor;">id</div><div class="t" style="left:238.28px;top:217.57px;font-size:17.92px;color:#7cacf8;font-family:'Liberation Mono',monospace;-webkit-text-stroke:0.35px currentColor;">=&quot;</div><div class="t" style="left:259.78px;top:217.57px;font-size:17.92px;color:#f29766;font-family:'Liberation Mono',monospace;-webkit-text-stroke:0.35px currentColor;">product-309</div><div class="t" style="left:378.07px;top:217.57px;font-size:17.92px;color:#7cacf8;font-family:'Liberation Mono',monospace;-webkit-text-stroke:0.35px currentColor;">&quot; </div><div class="t" style="left:399.58px;top:217.57px;font-size:17.92px;color:#9bbbdc;font-family:'Liberation Mono',monospace;-webkit-text-stroke:0.35px currentColor;">class</div><div class="t" style="left:453.35px;top:217.57px;font-size:17.92px;color:#7cacf8;font-family:'Liberation Mono',monospace;-webkit-text-stroke:0.35px currentColor;">=&quot;</div><div class="t" style="left:474.86px;top:217.57px;font-size:17.92px;color:#f29766;font-family:'Liberation Mono',monospace;-webkit-text-stroke:0.35px currentColor;">product type-product post-309 status-publish fir</div>
<div class="t" style="left:163.00px;top:245.24px;font-size:17.92px;color:#f29766;font-family:'Liberation Mono',monospace;-webkit-text-stroke:0.35px currentColor;">st outofstock product_cat-hoodies-sweatshirts has-post-thumbnail shipping-tax</div>
<div class="t" style="left:163.00px;top:272.91px;font-size:17.92px;color:#f29766;font-family:'Liberation Mono',monospace;-webkit-text-stroke:0.35px currentColor;">able purchasable product-type-variable</div><div class="t" style="left:571.64px;top:272.91px;font-size:17.92px;color:#7cacf8;font-family:'Liberation Mono',monospace;-webkit-text-stroke:0.35px currentColor;">&quot;&gt;</div>
<div class="t" style="left:179.00px;top:300.58px;font-size:17.92px;color:#f386b6;font-family:'Liberation Mono',monospace;-webkit-text-stroke:0.35px currentColor;">::before</div>
<div class="t" style="left:183.00px;top:328.26px;font-size:17.92px;color:#7cacf8;font-family:'Liberation Mono',monospace;-webkit-text-stroke:0.35px currentColor;">&lt;div </div><div class="t" style="left:236.77px;top:328.26px;font-size:17.92px;color:#9bbbdc;font-family:'Liberation Mono',monospace;-webkit-text-stroke:0.35px currentColor;">class</div><div class="t" style="left:290.54px;top:328.26px;font-size:17.92px;color:#7cacf8;font-family:'Liberation Mono',monospace;-webkit-text-stroke:0.35px currentColor;">=&quot;</div><div class="t" style="left:312.04px;top:328.26px;font-size:17.92px;color:#f29766;font-family:'Liberation Mono',monospace;-webkit-text-stroke:0.35px currentColor;">woocommerce-product-gallery woocommerce-product-gallery--with-i</div>
<div class="t" style="left:183.00px;top:355.93px;font-size:17.92px;color:#f29766;font-family:'Liberation Mono',monospace;-webkit-text-stroke:0.35px currentColor;">mages woocommerce-product-gallery--columns-4 images</div><div class="t" style="left:731.44px;top:355.93px;font-size:17.92px;color:#7cacf8;font-family:'Liberation Mono',monospace;-webkit-text-stroke:0.35px currentColor;">&quot; </div><div class="t" style="left:752.95px;top:355.93px;font-size:17.92px;color:#9bbbdc;font-family:'Liberation Mono',monospace;-webkit-text-stroke:0.35px currentColor;">data-columns</div><div class="t" style="left:881.99px;top:355.93px;font-size:17.92px;color:#7cacf8;font-family:'Liberation Mono',monospace;-webkit-text-stroke:0.35px currentColor;">=&quot;</div><div class="t" style="left:903.50px;top:355.93px;font-size:17.92px;color:#f29766;font-family:'Liberation Mono',monospace;-webkit-text-stroke:0.35px currentColor;">4</div><div class="t" style="left:914.25px;top:355.93px;font-size:17.92px;color:#7cacf8;font-family:'Liberation Mono',monospace;-webkit-text-stroke:0.35px currentColor;">&quot;</div>
<div class="t" style="left:183.00px;top:383.60px;font-size:17.92px;color:#9bbbdc;font-family:'Liberation Mono',monospace;-webkit-text-stroke:0.35px currentColor;">style</div><div class="t" style="left:236.77px;top:383.60px;font-size:17.92px;color:#7cacf8;font-family:'Liberation Mono',monospace;-webkit-text-stroke:0.35px currentColor;">=&quot;</div><div class="t" style="left:258.28px;top:383.60px;font-size:17.92px;color:#f29766;font-family:'Liberation Mono',monospace;-webkit-text-stroke:0.35px currentColor;">opacity: 1; transition: opacity 0.25s ease-in-out;</div><div class="t" style="left:795.96px;top:383.60px;font-size:17.92px;color:#7cacf8;font-family:'Liberation Mono',monospace;-webkit-text-stroke:0.35px currentColor;">&quot;&gt;</div><div class="r" style="left:821.97px;top:382.34px;width:22.50px;height:16.00px;background:#2a2a2a;border:1.8px solid #1e8fcf;border-radius:8px;box-sizing:border-box;"></div><div class="r" style="left:826.77px;top:388.54px;width:3.60px;height:3.60px;background:#e3e3e3;border-radius:50%;"></div><div class="r" style="left:831.42px;top:388.54px;width:3.60px;height:3.60px;background:#e3e3e3;border-radius:50%;"></div><div class="r" style="left:836.07px;top:388.54px;width:3.60px;height:3.60px;background:#e3e3e3;border-radius:50%;"></div><div class="t" style="left:848.97px;top:383.60px;font-size:17.92px;color:#7cacf8;font-family:'Liberation Mono',monospace;-webkit-text-stroke:0.35px currentColor;">&lt;/div&gt;</div>
<div class="t" style="left:183.00px;top:411.27px;font-size:17.92px;color:#7cacf8;font-family:'Liberation Mono',monospace;-webkit-text-stroke:0.35px currentColor;">&lt;div </div><div class="t" style="left:236.77px;top:411.27px;font-size:17.92px;color:#9bbbdc;font-family:'Liberation Mono',monospace;-webkit-text-stroke:0.35px currentColor;">class</div><div class="t" style="left:290.54px;top:411.27px;font-size:17.92px;color:#7cacf8;font-family:'Liberation Mono',monospace;-webkit-text-stroke:0.35px currentColor;">=&quot;</div><div class="t" style="left:312.04px;top:411.27px;font-size:17.92px;color:#f29766;font-family:'Liberation Mono',monospace;-webkit-text-stroke:0.35px currentColor;">summary entry-summary</div><div class="t" style="left:537.87px;top:411.27px;font-size:17.92px;color:#7cacf8;font-family:'Liberation Mono',monospace;-webkit-text-stroke:0.35px currentColor;">&quot;&gt;</div><div class="r" style="left:563.88px;top:410.01px;width:22.50px;height:16.00px;background:#2a2a2a;border:1.8px solid #1e8fcf;border-radius:8px;box-sizing:border-box;"></div><div class="r" style="left:568.68px;top:416.21px;width:3.60px;height:3.60px;background:#e3e3e3;border-radius:50%;"></div><div class="r" style="left:573.33px;top:416.21px;width:3.60px;height:3.60px;background:#e3e3e3;border-radius:50%;"></div><div class="r" style="left:577.98px;top:416.21px;width:3.60px;height:3.60px;background:#e3e3e3;border-radius:50%;"></div><div class="t" style="left:590.88px;top:411.27px;font-size:17.92px;color:#7cacf8;font-family:'Liberation Mono',monospace;-webkit-text-stroke:0.35px currentColor;">&lt;/div&gt;</div><div class="t" style="left:655.40px;top:411.27px;font-size:17.92px;color:#a0a0a0;font-family:'Liberation Mono',monospace;-webkit-text-stroke:0.35px currentColor;"> == </div><div class="t" style="left:698.42px;top:411.27px;font-size:17.92px;color:#a0a0a0;font-style:italic;font-family:'Liberation Mono',monospace;-webkit-text-stroke:0.35px currentColor;">$0</div>
<div class="t" style="left:183.00px;top:438.94px;font-size:17.92px;color:#7cacf8;font-family:'Liberation Mono',monospace;-webkit-text-stroke:0.35px currentColor;">&lt;div </div><div class="t" style="left:236.77px;top:438.94px;font-size:17.92px;color:#9bbbdc;font-family:'Liberation Mono',monospace;-webkit-text-stroke:0.35px currentColor;">class</div><div class="t" style="left:290.54px;top:438.94px;font-size:17.92px;color:#7cacf8;font-family:'Liberation Mono',monospace;-webkit-text-stroke:0.35px currentColor;">=&quot;</div><div class="t" style="left:312.04px;top:438.94px;font-size:17.92px;color:#f29766;font-family:'Liberation Mono',monospace;-webkit-text-stroke:0.35px currentColor;">woocommerce-tabs wc-tabs-wrapper</div><div class="t" style="left:656.16px;top:438.94px;font-size:17.92px;color:#7cacf8;font-family:'Liberation Mono',monospace;-webkit-text-stroke:0.35px currentColor;">&quot;&gt;</div><div class="r" style="left:682.17px;top:437.68px;width:22.50px;height:16.00px;background:#2a2a2a;border:1.8px solid #1e8fcf;border-radius:8px;box-sizing:border-box;"></div><div class="r" style="left:686.97px;top:443.88px;width:3.60px;height:3.60px;background:#e3e3e3;border-radius:50%;"></div><div class="r" style="left:691.62px;top:443.88px;width:3.60px;height:3.60px;background:#e3e3e3;border-radius:50%;"></div><div class="r" style="left:696.27px;top:443.88px;width:3.60px;height:3.60px;background:#e3e3e3;border-radius:50%;"></div><div class="t" style="left:709.17px;top:438.94px;font-size:17.92px;color:#7cacf8;font-family:'Liberation Mono',monospace;-webkit-text-stroke:0.35px currentColor;">&lt;/div&gt;</div>
<div class="t" style="left:183.00px;top:466.62px;font-size:17.92px;color:#7cacf8;font-family:'Liberation Mono',monospace;-webkit-text-stroke:0.35px currentColor;">&lt;section </div><div class="t" style="left:279.78px;top:466.62px;font-size:17.92px;color:#9bbbdc;font-family:'Liberation Mono',monospace;-webkit-text-stroke:0.35px currentColor;">class</div><div class="t" style="left:333.55px;top:466.62px;font-size:17.92px;color:#7cacf8;font-family:'Liberation Mono',monospace;-webkit-text-stroke:0.35px currentColor;">=&quot;</div><div class="t" style="left:355.06px;top:466.62px;font-size:17.92px;color:#f29766;font-family:'Liberation Mono',monospace;-webkit-text-stroke:0.35px currentColor;">related products</div><div class="t" style="left:527.12px;top:466.62px;font-size:17.92px;color:#7cacf8;font-family:'Liberation Mono',monospace;-webkit-text-stroke:0.35px currentColor;">&quot;&gt;</div><div class="r" style="left:553.13px;top:465.35px;width:22.50px;height:16.00px;background:#2a2a2a;border:1.8px solid #1e8fcf;border-radius:8px;box-sizing:border-box;"></div><div class="r" style="left:557.93px;top:471.55px;width:3.60px;height:3.60px;background:#e3e3e3;border-radius:50%;"></div><div class="r" style="left:562.58px;top:471.55px;width:3.60px;height:3.60px;background:#e3e3e3;border-radius:50%;"></div><div class="r" style="left:567.23px;top:471.55px;width:3.60px;height:3.60px;background:#e3e3e3;border-radius:50%;"></div><div class="t" style="left:580.13px;top:466.62px;font-size:17.92px;color:#7cacf8;font-family:'Liberation Mono',monospace;-webkit-text-stroke:0.35px currentColor;">&lt;/section&gt;</div>
<div class="t" style="left:183.00px;top:494.29px;font-size:17.92px;color:#7cacf8;font-family:'Liberation Mono',monospace;-webkit-text-stroke:0.35px currentColor;">&lt;nav </div><div class="t" style="left:236.77px;top:494.29px;font-size:17.92px;color:#9bbbdc;font-family:'Liberation Mono',monospace;-webkit-text-stroke:0.35px currentColor;">class</div><div class="t" style="left:290.54px;top:494.29px;font-size:17.92px;color:#7cacf8;font-family:'Liberation Mono',monospace;-webkit-text-stroke:0.35px currentColor;">=&quot;</div><div class="t" style="left:312.04px;top:494.29px;font-size:17.92px;color:#f29766;font-family:'Liberation Mono',monospace;-webkit-text-stroke:0.35px currentColor;">storefront-product-pagination</div><div class="t" style="left:623.90px;top:494.29px;font-size:17.92px;color:#7cacf8;font-family:'Liberation Mono',monospace;-webkit-text-stroke:0.35px currentColor;">&quot; </div><div class="t" style="left:645.41px;top:494.29px;font-size:17.92px;color:#9bbbdc;font-family:'Liberation Mono',monospace;-webkit-text-stroke:0.35px currentColor;">aria-label</div><div class="t" style="left:752.95px;top:494.29px;font-size:17.92px;color:#7cacf8;font-family:'Liberation Mono',monospace;-webkit-text-stroke:0.35px currentColor;">=&quot;</div><div class="t" style="left:774.45px;top:494.29px;font-size:17.92px;color:#f29766;font-family:'Liberation Mono',monospace;-webkit-text-stroke:0.35px currentColor;">More products</div><div class="t" style="left:914.25px;top:494.29px;font-size:17.92px;color:#7cacf8;font-family:'Liberation Mono',monospace;-webkit-text-stroke:0.35px currentColor;">&quot;&gt;</div><div class="r" style="left:940.26px;top:493.02px;width:22.50px;height:16.00px;background:#2a2a2a;border:1.8px solid #1e8fcf;border-radius:8px;box-sizing:border-box;"></div><div class="r" style="left:945.06px;top:499.22px;width:3.60px;height:3.60px;background:#e3e3e3;border-radius:50%;"></div><div class="r" style="left:949.71px;top:499.22px;width:3.60px;height:3.60px;background:#e3e3e3;border-radius:50%;"></div><div class="r" style="left:954.36px;top:499.22px;width:3.60px;height:3.60px;background:#e3e3e3;border-radius:50%;"></div>
<div class="t" style="left:183.00px;top:521.96px;font-size:17.92px;color:#7cacf8;font-family:'Liberation Mono',monospace;-webkit-text-stroke:0.35px currentColor;">&lt;/nav&gt;</div>
<div class="t" style="left:179.00px;top:549.63px;font-size:17.92px;color:#a0a0a0;font-family:'Liberation Mono',monospace;-webkit-text-stroke:0.35px currentColor;">&lt;!-- .storefront-product-pagination --&gt;</div>
<div class="t" style="left:179.00px;top:577.30px;font-size:17.92px;color:#f386b6;font-family:'Liberation Mono',monospace;-webkit-text-stroke:0.35px currentColor;">::after</div>
<div class="t" style="left:160.00px;top:604.98px;font-size:17.92px;color:#7cacf8;font-family:'Liberation Mono',monospace;-webkit-text-stroke:0.35px currentColor;">&lt;/div&gt;</div>
<div class="t" style="left:140.00px;top:632.65px;font-size:17.92px;color:#7cacf8;font-family:'Liberation Mono',monospace;-webkit-text-stroke:0.35px currentColor;">&lt;/main&gt;</div>
<div class="t" style="left:140.00px;top:660.32px;font-size:17.92px;color:#a0a0a0;font-family:'Liberation Mono',monospace;-webkit-text-stroke:0.35px currentColor;">&lt;!-- #main --&gt;</div>
<svg class="abs" style="left:109.0px;top:51.3px" width="13" height="10" viewBox="0 0 13 10"><path d="M0.5 1 L12.5 1 L6.5 9 Z" fill="#c7c7c7"/></svg>
<svg class="abs" style="left:129.0px;top:106.6px" width="13" height="10" viewBox="0 0 13 10"><path d="M0.5 1 L12.5 1 L6.5 9 Z" fill="#c7c7c7"/></svg>
<svg class="abs" style="left:149.0px;top:217.3px" width="13" height="10" viewBox="0 0 13 10"><path d="M0.5 1 L12.5 1 L6.5 9 Z" fill="#c7c7c7"/></svg>
<svg class="abs" style="left:171.0px;top:326.0px" width="10" height="14" viewBox="0 0 10 14"><path d="M1 0.5 L9 7 L1 13.5 Z" fill="#c7c7c7"/></svg>
<svg class="abs" style="left:171.0px;top:409.0px" width="10" height="14" viewBox="0 0 10 14"><path d="M1 0.5 L9 7 L1 13.5 Z" fill="#c7c7c7"/></svg>
<svg class="abs" style="left:171.0px;top:436.7px" width="10" height="14" viewBox="0 0 10 14"><path d="M1 0.5 L9 7 L1 13.5 Z" fill="#c7c7c7"/></svg>
<svg class="abs" style="left:171.0px;top:464.4px" width="10" height="14" viewBox="0 0 10 14"><path d="M1 0.5 L9 7 L1 13.5 Z" fill="#c7c7c7"/></svg>
<svg class="abs" style="left:171.0px;top:492.0px" width="10" height="14" viewBox="0 0 10 14"><path d="M1 0.5 L9 7 L1 13.5 Z" fill="#c7c7c7"/></svg>
<div class="r" style="left:967.00px;top:127.00px;width:26.00px;height:26.00px;background:#1f1f1f;border:2px solid #6e6e6e;border-radius:7px;box-sizing:border-box;"></div>
<svg class="abs" style="left:970px;top:130px" width="20" height="20" viewBox="0 0 20 20"><path d="M9 2.3 H3.2 V15.2 H7 L9.6 18 L12.2 15.2 H14.8 V10.5" fill="none" stroke="#c7c7c7" stroke-width="2"/><path d="M14.2 1 L15.3 4.2 L18.5 5.3 L15.3 6.4 L14.2 9.6 L13.1 6.4 L9.9 5.3 L13.1 4.2 Z" fill="#c7c7c7"/></svg>
</div>
<svg class="abs" style="left:1005px;top:97px" width="14" height="12" viewBox="0 0 14 12"><path d="M7 0.5 L13.5 11.5 L0.5 11.5 Z" fill="#9e9e9e"/></svg>
<div class="r" style="left:1005.00px;top:241.00px;width:14.00px;height:174.00px;background:#9e9e9e;border-radius:7px;"></div>
<svg class="abs" style="left:1005px;top:755px" width="14" height="12" viewBox="0 0 14 12"><path d="M0.5 0.5 L13.5 0.5 L7 11.5 Z" fill="#9e9e9e"/></svg>
<div class="r" style="left:0.00px;top:775.00px;width:1024.00px;height:2.00px;background:#5b5b5b;"></div>
<div class="r" style="left:1.00px;top:777.00px;width:38.00px;height:36.00px;background:#282828;border:1.5px solid #5e5e5e;box-sizing:border-box;"></div>
<svg class="abs" style="left:14px;top:788px" width="10" height="14" viewBox="0 0 10 14"><path d="M9 1 L1 7 L9 13 Z" fill="#e3e3e3"/></svg>
<div style="position:absolute;left:39px;top:777px;width:678px;height:38px;overflow:hidden">
<div class="t" style="left:-1.00px;top:9.56px;font-size:20px;color:#f2c530;transform:scaleX(0.9786);">shirts.has-post-thumbnail.shipping-taxable.purchasable.product-type-variable</div>
</div>
<div class="r" style="left:717.00px;top:777.00px;width:268.50px;height:37.00px;background:#004a77;"></div>
<div class="t" style="left:729.00px;top:786.56px;font-size:20px;color:#8ab4f8;-webkit-text-stroke:0.45px currentColor;transform:scaleX(0.9828);">div.summary.entry-summary</div>
<div class="r" style="left:986.00px;top:777.00px;width:36.00px;height:36.00px;background:#282828;border-left:1.5px solid #5e5e5e;box-sizing:border-box;"></div>
<svg class="abs" style="left:1000px;top:788px" width="10" height="14" viewBox="0 0 10 14"><path d="M1 1 L9 7 L1 13 Z" fill="#e3e3e3"/></svg>
<div class="r" style="left:0.00px;top:814.50px;width:1024.00px;height:1.80px;background:#5b5b5b;"></div>
<div class="r" style="left:0.00px;top:816.00px;width:1024.00px;height:42.00px;background:#3c3c3c;"></div>
<div class="r" style="left:0.00px;top:858.00px;width:1024.00px;height:2.00px;background:#5b5b5b;"></div>
<div class="t" style="left:17.00px;top:829.56px;font-size:20px;color:#a8c7fa;-webkit-text-stroke:0.45px currentColor;transform:scaleX(0.9364);">Styles</div>
<div class="r" style="left:0.00px;top:856.00px;width:85.00px;height:4.00px;background:#a8c7fa;border-radius:3px 3px 0 0;"></div>
<div class="t" style="left:101.50px;top:829.56px;font-size:20px;color:#e3e3e3;-webkit-text-stroke:0.45px currentColor;transform:scaleX(1.0133);">Computed</div>
<div class="t" style="left:229.00px;top:829.56px;font-size:20px;color:#e3e3e3;-webkit-text-stroke:0.45px currentColor;transform:scaleX(0.9825);">Layout</div>
<div class="t" style="left:322.00px;top:829.56px;font-size:20px;color:#e3e3e3;-webkit-text-stroke:0.45px currentColor;transform:scaleX(0.9575);">Event Listeners</div>
<div class="t" style="left:488.50px;top:829.56px;font-size:20px;color:#e3e3e3;-webkit-text-stroke:0.45px currentColor;transform:scaleX(0.9947);">DOM Breakpoints</div>
<div class="t" style="left:679.50px;top:829.56px;font-size:20px;color:#e3e3e3;-webkit-text-stroke:0.45px currentColor;transform:scaleX(0.9873);">Properties</div>
<div class="t" style="left:803.00px;top:829.56px;font-size:20px;color:#e3e3e3;-webkit-text-stroke:0.45px currentColor;transform:scaleX(0.9870);">Accessibility</div>
<div class="r" style="left:8.00px;top:865.00px;width:751.00px;height:32.00px;background:#3a3a3a;border-radius:16px;"></div>
<svg class="abs" style="left:25px;top:872px" width="18" height="18" viewBox="0 0 18 18"><path d="M1.5 1.8 H16.5 L10.2 9.5 V16.5 H7.8 V9.5 Z" fill="none" stroke="#c7c7c7" stroke-width="1.7" stroke-linejoin="round"/></svg>
<div class="t" style="left:54.00px;top:872.06px;font-size:20px;color:#c7c7c7;-webkit-text-stroke:0.45px currentColor;transform:scaleX(0.9900);">Filter</div>
<div class="t" style="left:770.00px;top:871.56px;font-size:20px;color:#d0d0d0;-webkit-text-stroke:0.5px currentColor;transform:scaleX(0.8994);">:hov</div>
<div class="t" style="left:818.00px;top:871.56px;font-size:20px;color:#d0d0d0;-webkit-text-stroke:0.5px currentColor;transform:scaleX(1.0333);">.cls</div>
<svg class="abs" style="left:866px;top:868px" width="32" height="30" viewBox="0 0 32 30"><path d="M12.5 2 V22 M2.5 12 H22.5" stroke="#c7c7c7" stroke-width="2.2"/><path d="M25 24 L29 20 V27 H22 Z" fill="#c7c7c7"/></svg>
<svg class="abs" style="left:911px;top:868px" width="28" height="28" viewBox="0 0 28 28"><path d="M5.5 3 H22.5 V16.5 H5.5 Z" fill="none" stroke="#c7c7c7" stroke-width="2.4" stroke-linejoin="round"/><rect x="5" y="11.5" width="18" height="6" fill="#c7c7c7"/><path d="M14 17 V25" stroke="#c7c7c7" stroke-width="4.2" stroke-linecap="round"/><path d="M17 3 V8 M20 3 V8" stroke="#c7c7c7" stroke-width="1.8"/></svg>
<svg class="abs" style="left:955px;top:868px" width="28" height="28" viewBox="0 0 28 28"><rect x="3.2" y="2.6" width="21.6" height="22" rx="2" fill="none" stroke="#c7c7c7" stroke-width="2.3"/><path d="M16.5 3 V24" stroke="#c7c7c7" stroke-width="2.3"/><path d="M12.5 8 L7.2 13.5 L12.5 19 Z" fill="#c7c7c7"/></svg>
<div class="r" style="left:0.00px;top:902.00px;width:1000.00px;height:1.80px;background:#5b5b5b;"></div>
<svg class="abs" style="left:1005px;top:868px" width="14" height="12" viewBox="0 0 14 12"><path d="M7 0.5 L13.5 11.5 L0.5 11.5 Z" fill="#9e9e9e"/></svg>
<div class="r" style="left:1005.00px;top:890.00px;width:14.00px;height:28.00px;background:#9e9e9e;border-radius:7px;"></div>
<svg class="abs" style="left:1005px;top:1014px" width="14" height="12" viewBox="0 0 14 12"><path d="M0.5 0.5 L13.5 0.5 L7 11.5 Z" fill="#9e9e9e"/></svg>
<div class="t" style="left:6.00px;top:910.46px;font-size:17.92px;color:#bdbdbd;font-family:'Liberation Mono',monospace;-webkit-text-stroke:0.35px currentColor;">element.style</div>
<div class="t" style="left:156.55px;top:910.46px;font-size:17.92px;color:#e3e3e3;font-family:'Liberation Mono',monospace;-webkit-text-stroke:0.35px currentColor;">{</div>
<div class="t" style="left:6.00px;top:938.76px;font-size:17.92px;color:#e3e3e3;font-family:'Liberation Mono',monospace;-webkit-text-stroke:0.35px currentColor;">}</div>
<div class="r" style="left:0.00px;top:963.00px;width:1000.00px;height:1.80px;background:#5b5b5b;"></div>
<div class="t" style="left:6.00px;top:971.26px;font-size:17.92px;color:#bdbdbd;font-family:'Liberation Mono',monospace;-webkit-text-stroke:0.35px currentColor;">@media</div>
<div class="t" style="left:81.28px;top:971.26px;font-size:17.92px;color:#e3e3e3;font-family:'Liberation Mono',monospace;-webkit-text-stroke:0.35px currentColor;">(min-width: 768px)</div>
<div class="t" style="left:285.60px;top:971.26px;font-size:17.92px;color:#bdbdbd;font-family:'Liberation Mono',monospace;-webkit-text-stroke:0.35px currentColor;">{</div>
<div class="t" style="left:19.00px;top:994.66px;font-size:17.92px;color:#e3e3e3;font-family:'Liberation Mono',monospace;-webkit-text-stroke:0.35px currentColor;">.single-product div.product .summary {</div>
<div class="t" style="left:46.00px;top:1019.76px;font-size:17.92px;color:#5ccfee;font-family:'Liberation Mono',monospace;-webkit-text-stroke:0.35px currentColor;">width</div>
<div class="t" style="left:99.77px;top:1019.76px;font-size:17.92px;color:#e3e3e3;font-family:'Liberation Mono',monospace;-webkit-text-stroke:0.35px currentColor;">: 52.9411764706%;</div>
<div class="t" style="left:749.61px;top:975.26px;font-size:17.92px;color:#e3e3e3;font-family:'Liberation Mono',monospace;-webkit-text-stroke:0.35px currentColor;transform:scaleX(0.9800);text-decoration:underline;text-decoration-color:#8a8a8a;">woocommerce…ver=4.5.4:1</div>
</div></body></html>
